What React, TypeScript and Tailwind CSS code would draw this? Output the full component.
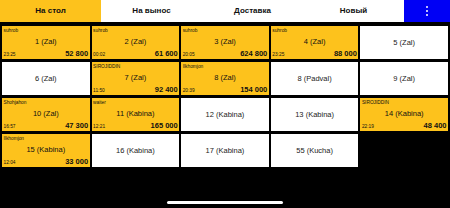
import React from "react";

type Table = {
    label: string;
    waiter?: string;
    time?: string;
    amount?: string;
};

const tables: (Table | null)[] = [
    { label: "1 (Zal)", waiter: "suhrob", time: "23:25", amount: "52 800" },
    { label: "2 (Zal)", waiter: "suhrob", time: "00:02", amount: "61 600" },
    { label: "3 (Zal)", waiter: "suhrob", time: "20:05", amount: "624 800" },
    { label: "4 (Zal)", waiter: "suhrob", time: "23:25", amount: "88 000" },
    { label: "5 (Zal)" },
    { label: "6 (Zal)" },
    { label: "7 (Zal)", waiter: "SIROJIDDIN", time: "11:50", amount: "92 400" },
    { label: "8 (Zal)", waiter: "Ilkhomjon", time: "20:39", amount: "154 000" },
    { label: "8 (Padval)" },
    { label: "9 (Zal)" },
    { label: "10 (Zal)", waiter: "Shohjahon", time: "16:57", amount: "47 300" },
    { label: "11 (Kabina)", waiter: "waiter", time: "12:21", amount: "165 000" },
    { label: "12 (Kabina)" },
    { label: "13 (Kabina)" },
    { label: "14 (Kabina)", waiter: "SIROJIDDIN", time: "22:19", amount: "48 400" },
    { label: "15 (Kabina)", waiter: "Ilkhomjon", time: "12:04", amount: "33 000" },
    { label: "16 (Kabina)" },
    { label: "17 (Kabina)" },
    { label: "55 (Kucha)" },
    null,
];

const tabs = ["На стол", "На вынос", "Доставка", "Новый"];

function TableCell({ table }: { table: Table | null }) {
    if (!table) return <div className="h-[33px]" />;

    const busy = !!table.waiter;

    if (!busy) {
        return (
            <div className="h-[33px] bg-white flex items-center justify-center text-[7.5px] text-[#222]">
                {table.label}
            </div>
        );
    }

    return (
        <div className="h-[33px] bg-[#fdc21c] flex flex-col justify-between px-[1.5px] pt-[2px] pb-[1.5px] text-[#111]">
            <div className="text-[4.8px] leading-[6px]">{table.waiter}</div>
            <div className="text-center text-[7.5px] leading-[8px]">{table.label}</div>
            <div className="flex items-end justify-between">
                <span className="text-[4.8px] leading-[6px]">{table.time}</span>
                <span className="text-[7.5px] leading-[8px] font-bold">{table.amount}</span>
            </div>
        </div>
    );
}

export default function App() {
    return (
        <div
            className="w-full h-[208px] bg-black flex flex-col relative overflow-hidden"
            style={{ fontFamily: '"Liberation Sans", Arial, sans-serif' }}
        >
            {/* Tabs */}
            <div className="flex h-[22px] bg-white">
                {tabs.map((t, i) => (
                    <div
                        key={t}
                        className={`flex-1 flex items-center justify-center text-[8px] font-bold text-[#111] ${
                            i === 0 ? "bg-[#fdc21c]" : "bg-white"
                        }`}
                    >
                        {t}
                    </div>
                ))}
                <div className="w-[46px] bg-[#0000f5] flex flex-col items-center justify-center gap-[2px]">
                    <div className="w-[2px] h-[2px] rounded-full bg-white" />
                    <div className="w-[2px] h-[2px] rounded-full bg-white" />
                    <div className="w-[2px] h-[2px] rounded-full bg-white" />
                </div>
            </div>

            {/* Tables grid */}
            <div className="grid grid-cols-5 gap-x-[2px] gap-y-[3px] px-[2px] pt-[4px]">
                {tables.map((t, i) => (
                    <TableCell key={i} table={t} />
                ))}
            </div>

            {/* Home indicator */}
            <div className="absolute left-[167px] top-[201px] w-[116px] h-[3px] rounded-full bg-white" />
        </div>
    );
}
